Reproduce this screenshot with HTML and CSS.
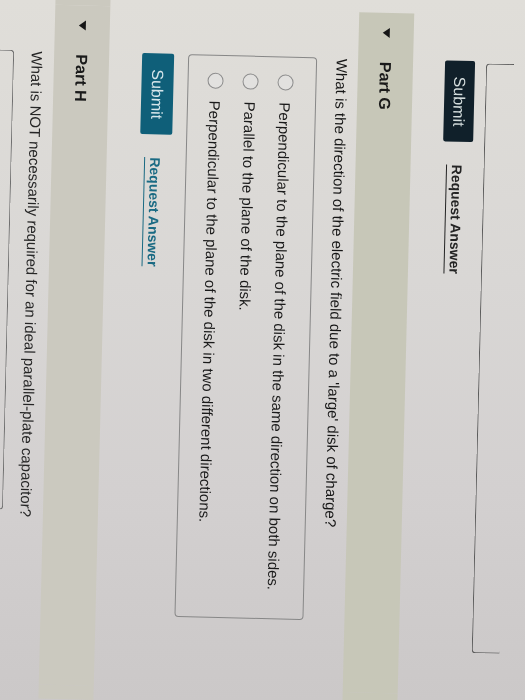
FILE: index.html
```html
<!DOCTYPE html>
<html lang="en">
<head>
<meta charset="utf-8">
<title>Part G</title>
<link rel="stylesheet" href="styles.css">
</head>
<body>
<div class="stage">
  <div class="page">
    <div class="answer-box"></div>
    <div class="actions actions-top">
      <span class="btn btn-dark" role="button">Submit</span>
      <a class="link link-dark" href="#">Request Answer</a>
    </div>

    <section class="part">
      <div class="part-header part-header-active">
        <span class="caret"></span>
        <span class="part-title">Part G</span>
      </div>
      <p class="question">What is the direction of the electric field due to a 'large' disk of charge?</p>
      <div class="options">
        <label class="option"><span class="radio"></span><span class="option-text">Perpendicular to the plane of the disk in the same direction on both sides.</span></label>
        <label class="option"><span class="radio"></span><span class="option-text">Parallel to the plane of the disk.</span></label>
        <label class="option"><span class="radio"></span><span class="option-text">Perpendicular to the plane of the disk in two different directions.</span></label>
      </div>
      <div class="actions actions-part">
        <span class="btn btn-teal" role="button">Submit</span>
        <a class="link link-teal" href="#">Request Answer</a>
      </div>
    </section>

    <section class="part">
      <div class="part-header part-header-next">
        <span class="caret"></span>
        <span class="part-title">Part H</span>
      </div>
      <p class="question question-h">What is NOT necessarily required for an ideal parallel-plate capacitor?</p>
      <div class="options-h"></div>
    </section>
  </div>
</div>
</body>
</html>
```

FILE: styles.css
```css
/* The screen is photographed turned a quarter turn clockwise:
   text runs top-to-bottom, blocks stack from right to left. */
html, body {
  margin: 0;
  padding: 0;
  width: 525px;
  height: 700px;
  overflow: hidden;
  background: #d4d2d0;
}

body {
  writing-mode: vertical-rl;
  font-family: "Liberation Sans", Arial, sans-serif;
  color: #1c1c1c;
}

.stage {
  box-sizing: border-box;
  inline-size: 700px;
  block-size: 525px;
  padding-block: 8.5px;
  padding-inline: 10px;
  overflow: hidden;
  background: linear-gradient(180deg, #e0ded9 0%, #d9d7d5 40%, #d3d0d0 70%, #cbc8c8 100%);
  filter: blur(0.35px);
}

/* slight camera tilt */
.page {
  box-sizing: border-box;
  inline-size: 680px;
  block-size: 508px;
  padding-block-start: 10.5px;
  transform-origin: 50% 50%;
  transform: rotate(1.4deg);
}

.answer-box {
  box-sizing: border-box;
  margin-inline-start: 48px;
  inline-size: 590px;
  block-size: 28px;
  border: 1.5px solid #5c5c5c;
  border-block-start: none;
  border-end-start-radius: 4px;
  border-end-end-radius: 4px;
}

.actions {
  display: flex;
  align-items: center;
  gap: 23px;
  margin-inline-start: 46px;
}

.actions-top {
  margin-block-start: 11px;
  block-size: 30px;
}

.actions-part {
  margin-block-start: 14px;
  block-size: 32px;
}

.btn {
  box-sizing: border-box;
  display: flex;
  align-items: center;
  justify-content: center;
  block-size: 100%;
  padding-inline: 15.5px;
  border-radius: 2px;
  font-size: 16px;
  line-height: 1;
}

.btn-dark {
  background: #10202a;
  color: #d3dcdc;
}

.btn-teal {
  background: #0f5f79;
  color: #d5e5ea;
}

.link {
  font-size: 14px;
  font-weight: bold;
  text-decoration: underline;
  text-underline-position: left;
  text-underline-offset: 2px;
}

.link-dark {
  color: #242424;
}

.link-teal {
  color: #1a6a83;
}

.part-header {
  position: relative;
  display: flex;
  align-items: center;
  block-size: 55px;
}

.part-header::after {
  content: "";
  position: absolute;
  inset-block: 0;
  inset-inline-start: 100%;
  inline-size: 14px;
  background: inherit;
}

.part-header-active {
  margin-block-start: 32px;
  background: #c7c7b8;
}

.part-header-next {
  margin-block-start: 33px;
  background: #cbc9bf;
}

.part-header-next::before {
  content: "";
  position: absolute;
  inset-block: 0;
  inset-inline-end: 100%;
  inline-size: 14px;
  background: inherit;
}

.caret {
  inline-size: 0;
  block-size: 0;
  margin-inline-start: 15px;
  border-inline-start: 5px solid transparent;
  border-inline-end: 5px solid transparent;
  border-block-start: 7px solid #161616;
}

.part-header-next .caret {
  margin-inline-start: 14.5px;
}

.part-title {
  margin-inline-start: 24px;
  font-size: 16px;
  font-weight: bold;
  color: #1a1a1a;
}

.question {
  margin-block: 7px 0;
  margin-inline: 47px 0;
  font-size: 15px;
  line-height: 18px;
  color: #161616;
}

.question-h {
  margin-block-start: 8px;
  color: #262626;
}

.options {
  box-sizing: border-box;
  margin-block-start: 16px;
  margin-inline-start: 46px;
  inline-size: 563px;
  padding-block: 12px 10px;
  border: 1px solid #878787;
  border-radius: 4px;
}

.option {
  display: flex;
  align-items: center;
  block-size: 35px;
  padding-inline-start: 17px;
}

.radio {
  box-sizing: border-box;
  flex: none;
  inline-size: 16px;
  block-size: 16px;
  border: 1.5px solid #8d8d8d;
  border-radius: 50%;
  background: #e2e1df;
}

.option-text {
  margin-inline-start: 12px;
  font-size: 15px;
  color: #1a1a1a;
}

/* top edge of the next answer box, cut by the frame */
.options-h {
  position: relative;
  margin-block-start: 14px;
  margin-inline-start: 46px;
  inline-size: 460px;
  block-size: 0;
}

.options-h::before {
  content: "";
  position: absolute;
  inset-inline: 0;
  inset-block-start: 0;
  block-size: 14px;
  border: 1.5px solid #707070;
  border-block-end: none;
  border-start-start-radius: 4px;
  border-start-end-radius: 4px;
}
```
